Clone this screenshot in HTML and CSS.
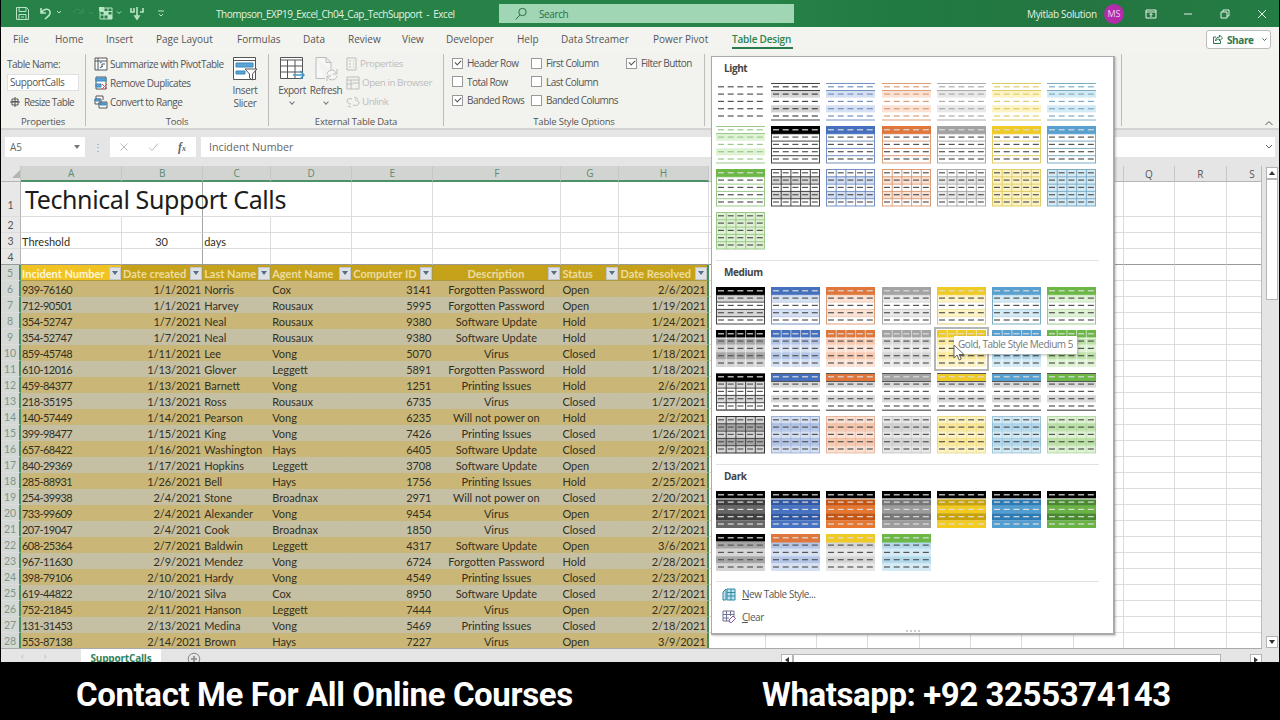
FILE: index.html
```html
<!DOCTYPE html>
<html lang="en">
<head>
    <meta charset="UTF-8">
    <title>Thompson_EXP19_Excel_Ch04_Cap_TechSupport - Excel</title>
    <link rel="stylesheet" href="styles.css">
</head>
<body>
<div class="window">
    <header class="titlebar">
        <div class="quick">
            <svg width="15" height="15" viewBox="0 0 15 15"><path d="M1.500 1.500h10l2 2v10h-12zM4 1.500v4h7v-4M4 13.500v-5h7v5M6 11h3"/></svg>
            <svg width="25" height="15" viewBox="0 0 25 15"><path class="thick" d="M2 2v5h5M2.500 6.500C5 2 12 2 11 7.500 10.500 10 8 11 6 13"/><path d="M18 5l2 2 2-2"/></svg>
            <svg class="faded" width="25" height="15" viewBox="0 0 25 15"><path d="M12 2v5H7M11.500 6.500C9 2 2 2 3 7.500M18 6l2 2 2-2"/></svg>
            <svg width="26" height="15" viewBox="0 0 26 15"><path d="M2 2h12v11H2zM2 5.500h12M2 9h12M6 2v11M10 2v11"/><path class="solid" d="M1 1h5v4H1zM6 6h4v3H6zM10 9h4v4h-4z"/><path d="M19 5.500l2 2 2-2"/></svg>
            <svg width="16" height="15" viewBox="0 0 16 15"><path class="thick" d="M2 2v4h3V2M8 1v9M11 6h3V2M6 10h4l-2 3z"/></svg>
            <svg class="more" width="10" height="10" viewBox="0 0 10 10"><path d="M2 2h6M3 5l2 2 2-2"/></svg>
        </div>
        <div class="doc-name">Thompson_EXP19_Excel_Ch04_Cap_TechSupport &nbsp;-&nbsp; Excel</div>
        <div class="search">
            <svg width="14" height="14" viewBox="0 0 14 14"><circle cx="8.500" cy="5" r="3.700"/><path d="M6 8l-4.500 4.500"/></svg>
            <span>Search</span>
        </div>
        <div class="account">Myitlab Solution</div>
        <div class="avatar">MS</div>
        <div class="win-buttons">
            <svg width="12" height="12" viewBox="0 0 12 12"><path d="M1 2h10v8H1zM1 4h10M6 9V5.500M4.500 7L6 5.500 7.500 7"/></svg>
            <svg width="12" height="12" viewBox="0 0 12 12"><path d="M2 6h8"/></svg>
            <svg width="12" height="12" viewBox="0 0 12 12"><path d="M2 4h6v6H2zM4 4V2h6v6H8"/></svg>
            <svg width="12" height="12" viewBox="0 0 12 12"><path d="M2 2l8 8M10 2l-8 8"/></svg>
        </div>
    </header>

    <nav class="tabs">
        <span>File</span><span>Home</span><span>Insert</span><span>Page Layout</span><span>Formulas</span><span>Data</span><span>Review</span><span>View</span><span>Developer</span><span>Help</span><span>Data Streamer</span><span>Power Pivot</span><span class="active">Table Design</span>
        <div class="share">
            <svg width="11" height="11" viewBox="0 0 11 11"><path d="M4 3H1.500v6.500h7V7M3.500 7c0-3 2-4 4-4V1l3 3-3 3V5c-2 0-3 .5-4 2z"/></svg>
            <b>Share</b>
            <svg width="7" height="7" viewBox="0 0 7 7"><path d="M1.500 2.500l2 2 2-2"/></svg>
        </div>
    </nav>

    <section class="ribbon">
        <div class="group props">
            <div class="stack">
                <span>Table Name:</span>
                <div class="name-input">SupportCalls</div>
                <span class="cmd"><svg width="12" height="12" viewBox="0 0 12 12"><path d="M3 3h6v6H3zM3 5.500h6M6 1v10M1 6h10"/></svg>Resize Table</span>
            </div>
            <div class="caption">Properties</div>
        </div>
        <div class="group tools">
            <div class="row">
                <div class="stack">
                    <span class="cmd pivot"><svg width="14" height="14" viewBox="0 0 14 14"><path class="fill-w" d="M1 1h12v12H1z"/><path d="M1 4h12M4 1v12M8 9.500V7h3M7 9l1 1 1-1"/><path class="blue" d="M6 6l2-1.500M6 11l2-1.500"/></svg>Summarize with PivotTable</span>
                    <span class="cmd"><svg width="14" height="14" viewBox="0 0 14 14"><path class="fill-w" d="M2 1h10v12H2z"/><path class="fill-b" d="M2 2h10v3H2zM2 8h5v3H2z"/><path class="red" d="M8 8l5 5M13 8l-5 5"/></svg>Remove Duplicates</span>
                    <span class="cmd"><svg width="14" height="14" viewBox="0 0 14 14"><path class="fill-w" d="M2 4V1h7v4M1 4h6v5H1zM5 7h8v6H5z"/><path class="fill-b" d="M6 8h6v2H6zM1 4h5v2H1z"/></svg>Convert to Range</span>
                </div>
                <div class="big slicer">
                    <svg width="26" height="26" viewBox="0 0 26 26"><path class="fill-w" d="M1.500 1.500h22v22h-22z"/><path d="M1.500 4.500h22"/><path class="fill-b" d="M4 7h17v4H4zM4 15h9v3H4z"/><path class="fill-w" d="M13 13h12l-4.500 5v6l-3-2v-4z"/></svg>
                    <span>Insert<br>Slicer</span>
                </div>
            </div>
            <div class="caption">Tools</div>
        </div>
        <div class="group ext">
            <div class="row">
                <div class="big">
                    <svg width="26" height="26" viewBox="0 0 26 26"><path class="fill-w" d="M1.500 1.500h22v21h-22z"/><path d="M1.500 4h22M1.500 10h22M1.500 16h22M8.500 4v18.500M16 4v18.500"/><path class="blue" d="M14 19h11M21 15l4 4-4 4"/></svg>
                    <span>Export</span><i class="chev"></i>
                </div>
                <div class="big">
                    <svg width="26" height="26" viewBox="0 0 26 26"><path class="pale" d="M3 1.500h10l5 5v7M3 1.500v21h9M13 1.500v5h5"/><path class="pale" d="M14 18c1-5 8-5 9-1M24 13v5h-4M24 20c-1 5-8 5-9 1M14 25v-5h4"/></svg>
                    <span>Refresh</span><i class="chev"></i>
                </div>
                <div class="stack off">
                    <span class="cmd"><svg width="12" height="14" viewBox="0 0 12 14"><path d="M1 1h9v12H1zM3 4h2M3 7h2M3 10h2M7 4h1M7 7h1M7 10h1"/></svg>Properties</span>
                    <span class="cmd"><svg width="14" height="14" viewBox="0 0 14 14"><path d="M1 1h12v12H1zM1 4h12M1 8h6M5 4v9M7 7h6"/></svg>Open in Browser</span>
                    <span class="cmd"><svg width="14" height="12" viewBox="0 0 14 12"><path d="M6 3C3 2 1 3 1 5s2 3 4 3M7 9c3 1 6 0 6-2s-2-3-4-3M8 1l4 2M2 10l3 1"/></svg>Unlink</span>
                </div>
            </div>
            <div class="caption">External Table Data</div>
        </div>
        <div class="group opts">
            <div class="checks">
                <label><i class="box on"></i>Header Row</label><label><i class="box"></i>First Column</label><label><i class="box on"></i>Filter Button</label>
                <label><i class="box"></i>Total Row</label><label><i class="box"></i>Last Column</label><span></span>
                <label><i class="box on"></i>Banded Rows</label><label><i class="box"></i>Banded Columns</label>
            </div>
            <div class="caption">Table Style Options</div>
        </div>
        <div class="group gallery-slot"></div>
        <div class="ribbon-end"><svg width="10" height="8" viewBox="0 0 10 8"><path d="M1.500 6L5 2.500 8.500 6"/></svg></div>
    </section>

    <section class="formula">
        <div class="name-box">A5<i class="tri"></i></div>
        <span class="dots">⋮</span>
        <div class="fx">
            <svg width="10" height="10" viewBox="0 0 10 10"><path d="M1.500 1.500l7 7M8.500 1.500l-7 7"/></svg>
            <svg width="11" height="10" viewBox="0 0 11 10"><path d="M1 5.500l3 3 6-7"/></svg>
            <em>f<small>x</small></em>
        </div>
        <div class="formula-text">Incident Number<svg width="10" height="8" viewBox="0 0 10 8"><path d="M2 2l3 3 3-3"/></svg></div>
    </section>

    <main class="sheet">
        <div class="cells"><table id="grid"></table></div>
        <div class="vscroll"><i class="arrow up"></i><i class="thumb"></i><i class="arrow down"></i></div>
    </main>

    <footer class="sheetbar">
        <span class="nav-arrows"><i>‹</i><i>›</i></span>
        <span class="sheet-tab">SupportCalls</span>
        <svg width="14" height="14" viewBox="0 0 14 14"><circle cx="7" cy="7" r="5.800"/><path class="plus" d="M7 4v6M4 7h6"/></svg>
        <div class="hscroll"><i class="arrow left"></i><i class="hthumb"></i><i class="arrow right"></i></div>
    </footer>

    <div class="styles-menu">
        <section class="light"><h3>Light</h3><div class="thumbs" id="light"></div></section>
        <section class="medium"><h3>Medium</h3><div class="thumbs" id="medium"></div></section>
        <section class="dark"><h3>Dark</h3><div class="thumbs" id="dark"></div></section>
        <div class="menu-items">
            <div><svg width="14" height="14" viewBox="0 0 14 14"><path class="teal" d="M5 2h8v11H5zM5 5.500h8M5 9h8M9 2v11"/><path class="teal" d="M1 5l3-3v11H1z"/></svg><span><u>N</u>ew Table Style...</span></div>
            <div><svg width="14" height="14" viewBox="0 0 14 14"><path class="slate" d="M1 1h11v7M1 1v10h6M1 4.500h11M1 8h6M4.500 1v10M8.500 1v5"/><path class="purple" d="M7 10l4-4 2.500 2.500-4 4H8z"/></svg><span><u>C</u>lear</span></div>
        </div>
        <div class="grip"><i></i><i></i><i></i><i></i></div>
        <div class="tooltip">Gold, Table Style Medium 5</div>
        <svg class="pointer" width="12" height="18" viewBox="0 0 12 18"><path d="M1 1v13l3-3 2.200 5 2-1-2-4.500H11z"/></svg>
    </div>
</div>
<div class="banner"><span class="contact">Contact Me For All Online Courses</span><span class="phone">Whatsapp: +92 3255374143</span></div>
<script src="script.js"></script>
</body>
</html>
```
FILE: styles.css
```css
* { box-sizing: border-box; }
body { margin: 0; width: 1280px; height: 720px; overflow: hidden; background: #000; font-family: "Open Sans", "Noto Sans", sans-serif; font-size: 10px; color: #555; }
svg { fill: none; stroke: currentColor; stroke-width: 1; flex: none; display: block; }
i { font-style: normal; }

.window { position: relative; width: 1278px; height: 662px; margin-left: 1px; overflow: hidden; background: #e4e4e4; }

/* title bar */
.titlebar { display: flex; align-items: center; height: 27px; background: linear-gradient(90deg, #268246 0 60%, #207b41 70%, #257541 85%, #237d43); color: #e2f2e6; }
.quick { display: flex; align-items: center; width: 215px; padding-left: 14px; color: #b9e4c5; }
.quick svg:nth-child(2) { margin-left: 9px; }
.quick svg:nth-child(3) { margin-left: 7px; }
.quick svg:nth-child(4) { margin-left: 2px; }
.quick svg:nth-child(5) { margin-left: 5px; }
.quick .more { margin-left: 11px; }
.thick { stroke-width: 1.6; }
.solid { fill: currentColor; stroke: none; }
.faded { opacity: .15; }
.doc-name { width: 283px; white-space: nowrap; padding-top: 1px; font-size: 10px; letter-spacing: -.48px; }
.search { display: flex; align-items: center; width: 295px; height: 19px; padding-left: 15px; background: #a1d6b4; color: #2c6d45; }
.search span { margin-left: 11px; letter-spacing: -.4px; }
.account { width: 77px; margin-left: 233px; white-space: nowrap; letter-spacing: -.35px; }
.avatar { width: 20px; height: 20px; border-radius: 50%; background: #b32cab; color: #f0c9ee; text-align: center; line-height: 20px; font-size: 9px; }
.win-buttons { display: flex; gap: 25px; margin-left: 21px; }

/* ribbon tabs */
.tabs { position: relative; display: grid; grid-template-columns: 42px 51px 50px 81px 66px 45px 54px 44px 71px 44px 92px 79px 61px 1fr; height: 25px; padding-left: 12px; background: #f3f3f0; line-height: 25px; white-space: nowrap; }
.tabs .active { color: #2a8450; font-weight: 600; letter-spacing: -.2px; border-bottom: 2px solid #2a7a4c; height: 22px; }
.share { display: flex; align-items: center; justify-self: end; gap: 4px; width: 65px; height: 19px; margin: 3px 8px 0 0; padding-left: 5px; background: #fff; border: 1px solid #bbb; border-radius: 3px; color: #2f7650; font-size: 10px; letter-spacing: -.4px; line-height: 18px; }
.share svg:last-child { margin-left: 3px; }

/* ribbon */
.ribbon { display: grid; grid-template-columns: 85px 183px 175px 261px 417px 1fr; height: 78px; padding-top: 2px; background: #f2f2ef; border-bottom: 2px solid #d3d3d3; letter-spacing: -.15px; white-space: nowrap; }
.group { display: flex; flex-direction: column; justify-content: space-between; height: 72px; border-right: 1px solid #bcbcbc; }
.caption { text-align: center; line-height: 14px; margin-bottom: -3px; font-size: 9.500px; letter-spacing: -.2px; }
.row { display: flex; }
.stack { display: grid; grid-template-rows: repeat(3, 19px); align-items: center; }
.props .stack { padding-left: 6px; letter-spacing: -.5px; }
.name-input { width: 72px; height: 17px; padding-left: 2px; background: #fff; border: 1px solid #e0e0e0; line-height: 15px; letter-spacing: -.4px; }
.cmd { display: flex; align-items: center; gap: 2px; }
.props .cmd { gap: 3px; padding-left: 2px; letter-spacing: -.6px; }
.tools .stack { width: 136px; padding-left: 8px; letter-spacing: -.5px; }
.tools .pivot { letter-spacing: -.5px; }
.fill-w { fill: #fff; }
.fill-b { fill: #5aa5d8; stroke: #3f85b8; }
.blue { stroke: #3c9ac7; stroke-width: 1.500; }
.red { stroke: #d05050; }
.pale { stroke: #bbb; fill: #f7f7f7; }
.big { display: flex; flex-direction: column; align-items: center; padding-top: 2px; line-height: 13px; text-align: center; }
.big span { margin-top: 2px; }
.slicer { margin-left: 9px; width: 28px; letter-spacing: -.35px; }
.ext .big { width: 34px; letter-spacing: -.5px; }
.ext .big:first-child { margin-left: 6px; }
.ext .off { margin-left: 3px; color: #bdbdbd; font-size: 9.800px; letter-spacing: -.45px; }
.chev { width: 4px; height: 4px; margin-top: 3px; border: solid #777; border-width: 0 1px 1px 0; transform: rotate(45deg); }
.checks { display: grid; grid-template-columns: 79px 95px 1fr; grid-template-rows: repeat(3, 18.500px); padding-left: 8px; align-items: center; letter-spacing: -.55px; }
.checks label { display: flex; align-items: center; gap: 4px; }
.box { width: 11px; height: 11px; border: 1px solid #999; background: #fff; position: relative; }
.box.on::after { content: ""; position: absolute; left: 2px; top: 1.500px; width: 5px; height: 3px; border: solid #555; border-width: 0 0 1px 1px; transform: rotate(-45deg); }
.ribbon-end { display: flex; align-items: flex-end; justify-content: flex-end; padding: 0 5px 1px 0; }

/* formula bar */
.formula { display: flex; height: 36px; padding-top: 7px; background: #e5e5e5; color: #666; }
.formula > * { height: 20px; line-height: 20px; }
.name-box { display: flex; justify-content: space-between; align-items: center; width: 80px; margin-left: 4px; padding: 0 5px; background: #fff; }
.tri { border: 3px solid transparent; border-top: 4px solid #777; border-bottom: 0; }
.dots { width: 25px; text-align: center; color: #999; }
.fx { display: flex; align-items: center; width: 86px; padding-left: 9px; gap: 19px; background: #fff; color: #bbb; }
.fx em { font: italic bold 12px "Liberation Serif", serif; color: #666; }
.fx small { font-size: 8px; }
.formula-text { display: flex; align-items: center; justify-content: space-between; width: 1074px; margin-left: 5px; padding: 0 1px 0 8px; background: #fff; font-size: 10.700px; }

/* sheet */
.sheet { display: flex; height: 483px; }
.cells { width: 1261px; height: 483px; overflow: hidden; border-right: 1px solid #bbb; border-bottom: 1px solid #aaa; background: #fff; }
#grid { table-layout: fixed; width: 1277px; border-spacing: 0; font-family: Lato, sans-serif; font-size: 11px; line-height: 13px; color: #332f22; }
#grid th, #grid td { padding: 2px 2px 0 1px; height: 16px; border: solid #dcdcdc; border-width: 0 1px 1px 0; white-space: nowrap; overflow: visible; }
#grid .num { padding-right: 1px; letter-spacing: -.08px; }
#grid .in:nth-child(2) { letter-spacing: -.7px; letter-spacing: -.55px; }
#grid .head .in:nth-child(2) { letter-spacing: 0; }
#grid thead th { height: 16px; padding: 0; background: #e5e5e5; border-right-color: #c6c6c6; border-bottom-color: #b5b5b5; font: 10px "Open Sans", sans-serif; line-height: 14px; color: #555; }
#grid thead .sel { background: #d1d4d1; border-bottom: 2px solid #4c9167; color: #5d8b72; line-height: 13px; }
#grid thead .corner { text-align: right; padding: 0; }
.corner i { display: inline-block; border-left: 8px solid transparent; border-bottom: 8px solid #b5b5b5; }
#grid tbody th { background: #e8e8e8; border-right-color: #b5b5b5; font-weight: 400; font-size: 10.500px; color: #555; padding: 2px 0 0; }
#grid .r1 th, #grid .r1 td { height: 35px; vertical-align: bottom; }
#grid .r1 th { padding-bottom: 4px; }
#grid .r1 .title { font-family: "Noto Sans", sans-serif; font-size: 25px; line-height: 33px; padding: 0 0 0 4px; color: #1c1c1c; letter-spacing: -.4px; }
#grid .r1 .title, #grid .r1 .over { border-right-color: transparent; }
#grid .r4 td, #grid .r4 th { border-bottom-color: #999; }
#grid .freeze { border-right-color: #a5a5a5; }
#grid tbody .selrow th { background: #d5d9d5; color: #7f9588; border-right: 2px solid #479165; }
#grid .band0 .in { background: #cab778; border-color: #c8b77b; }
#grid .band1 .in { background: #c5bfa3; border-color: #c3bea4; }
#grid .selrow .last { border-right: 2px solid #478d5b !important; }
.num { text-align: right; }
.mid { text-align: center; }
#grid .head .in { height: 16px; padding: 0 0 0 1px; background: #c5a219; border-color: #ae9943; color: #eddca0; font-weight: 700; }
#grid .head .first { background: #f1c322; color: #fff6d9; }
.hcell { display: flex; align-items: center; justify-content: space-between; height: 15px; padding-top: 1px; }
.hcell span { flex: 1; padding-top: 1px; }
.hcell span.mid { padding-left: 9px; }
.filter { display: flex; align-items: center; justify-content: center; width: 12px; height: 13px; background: #dfe2e5; border: 1px solid #c4c7ca; }
.filter::after { content: ""; border: 3px solid transparent; border-top: 4px solid #536c87; border-bottom: 0; }
.vscroll { display: flex; flex-direction: column; align-items: center; width: 17px; padding: 1px 0 1px 3px; }
.arrow { display: flex; align-items: center; justify-content: center; width: 12px; height: 12px; background: #fff; border: 1px solid #b5b5b5; flex: none; }
.arrow::after { content: ""; border: 3px solid transparent; }
.up::after { border-bottom: 4px solid #333; border-top: 0; }
.down::after { border-top: 4px solid #333; border-bottom: 0; }
.left::after { border-right: 4px solid #333; border-left: 0; }
.right::after { border-left: 4px solid #333; border-right: 0; }
.thumb { width: 12px; height: 121px; margin-bottom: auto; background: #fff; border: 1px solid #b5b5b5; }

/* sheet tabs */
.sheetbar { display: flex; height: 13px; color: #888; background: #e5e5e5; }
.nav-arrows { display: flex; gap: 20px; width: 80px; padding-left: 20px; color: #bbb; font-size: 9px; line-height: 13px; }
.sheet-tab { width: 80px; height: 13px; background: #fff; color: #318258; font-weight: 700; text-align: center; letter-spacing: -.2px; line-height: 19px; }
.sheetbar > svg { margin: 3px 0 0 26px; }
.plus { stroke-width: 1.600; }
.hscroll { display: flex; width: 481px; margin: 5px 0 0 580px; }
.hthumb { width: 428px; height: 20px; background: #fff; border: 1px solid #b5b5b5; }
.hscroll .right { margin-left: auto; }

/* table styles gallery */
.styles-menu { position: absolute; left: 710px; top: 56px; width: 404px; height: 579px; background: #fff; border: 1px solid #aaa; border-width: 1px 2px 2px 1px; box-shadow: 1px 1px 2px #0003; }
.styles-menu section { margin: 0 14px 0 4px; border-bottom: 1px solid #e2e2e2; }
.styles-menu h3 { height: 25.500px; margin: 0; padding: 4px 0 0 8px; font-size: 10px; line-height: 15px; font-weight: 700; color: #444; letter-spacing: -.4px; }
.light { height: 204px; }
.medium { height: 204px; }
.dark { height: 117px; }
.thumbs { display: grid; grid-template-columns: repeat(7, 55.200px); grid-auto-rows: 43.300px; }
.thumbs svg { width: 49px; height: 38px; stroke: none; }
.thumbs .hover { outline: 2px solid #b5b5b5; outline-offset: 1px; }
.menu-items { padding-left: 10px; color: #555; }
.menu-items div { display: flex; align-items: center; gap: 6px; height: 23px; letter-spacing: -.45px; }
.teal { stroke: #3188a3; fill: #bde3ec; }
.slate { stroke: #6d7191; }
.purple { stroke: #8d54a5; fill: #fff; }
.grip { display: flex; gap: 2px; justify-content: center; margin-top: 2px; }
.grip i { width: 2px; height: 2px; background: #ccc; }
.tooltip { position: absolute; left: 242px; top: 279px; width: 123px; height: 18px; padding-left: 4px; background: #fff; box-shadow: 1px 1px 3px #0004; line-height: 17px; color: #777; white-space: nowrap; letter-spacing: -.45px; }
.pointer { position: absolute; left: 241px; top: 287px; fill: #fff; stroke: #666; }

/* bottom banner */
.banner { display: flex; height: 58px; padding-left: 76px; color: #fff; font: 700 33px/65px Roboto, sans-serif; white-space: nowrap; letter-spacing: -.38px; }
.contact { width: 686px; }
.phone { letter-spacing: -.42px; }
```
FILE: script.js
```js
const widths = [20, 101, 81, 68, 81, 81, 128, 58, 89, 57, 51, 51, 52, 51, 51, 52, 50, 51, 52, 51];
const letters = 'ABCDEFGHIJKLMNOPQRS'.split('');
const headers = ['Incident Number', 'Date created', 'Last Name', 'Agent Name', 'Computer ID', 'Description', 'Status', 'Date Resolved'];
const align = ['', 'num', '', '', 'num', 'mid', '', 'num'];
const calls = [
    '939-76160|1/1/2021|Norris|Cox|3141|Forgotten Password|Open|2/6/2021',
    '712-90501|1/1/2021|Harvey|Rousaux|5995|Forgotten Password|Open|1/19/2021',
    '354-52747|1/7/2021|Neal|Rousaux|9380|Software Update|Hold|1/24/2021',
    '354-52747|1/7/2021|Neal|Rousaux|9380|Software Update|Hold|1/24/2021',
    '859-45748|1/11/2021|Lee|Vong|5070|Virus|Closed|1/18/2021',
    '610-12016|1/13/2021|Glover|Leggett|5891|Forgotten Password|Hold|1/18/2021',
    '459-84377|1/13/2021|Barnett|Vong|1251|Printing Issues|Hold|2/6/2021',
    '218-35195|1/13/2021|Ross|Rousaux|6735|Virus|Closed|1/27/2021',
    '140-57449|1/14/2021|Pearson|Vong|6235|Will not power on|Hold|2/2/2021',
    '399-98477|1/15/2021|King|Vong|7426|Printing Issues|Closed|1/26/2021',
    '657-68422|1/16/2021|Washington|Hays|6405|Software Update|Closed|2/9/2021',
    '840-29369|1/17/2021|Hopkins|Leggett|3708|Software Update|Open|2/13/2021',
    '285-88931|1/26/2021|Bell|Hays|1756|Printing Issues|Hold|2/25/2021',
    '254-39938|2/4/2021|Stone|Broadnax|2971|Will not power on|Closed|2/20/2021',
    '733-99609|2/4/2021|Alexander|Vong|9454|Virus|Open|2/17/2021',
    '207-19047|2/4/2021|Cook|Broadnax|1850|Virus|Closed|2/12/2021',
    '608-25364|2/7/2021|Baldwin|Leggett|4317|Software Update|Open|3/6/2021',
    '967-11630|2/9/2021|Mendez|Vong|6724|Forgotten Password|Hold|2/28/2021',
    '398-79106|2/10/2021|Hardy|Vong|4549|Printing Issues|Closed|2/23/2021',
    '619-44822|2/10/2021|Silva|Cox|8950|Software Update|Closed|2/12/2021',
    '752-21845|2/11/2021|Hanson|Leggett|7444|Virus|Open|2/27/2021',
    '131-31453|2/13/2021|Medina|Vong|5469|Printing Issues|Closed|2/18/2021',
    '553-87138|2/14/2021|Brown|Hays|7227|Virus|Open|3/9/2021'
];

const blanks = n => '<td></td>'.repeat(n);

function topRow(n) {
    if (n === 1) return `<tr class="r1"><th>1</th><td class="title">Technical Support Calls</td><td class="freeze"></td><td class="over"></td>${blanks(16)}</tr>`;
    if (n === 3) return `<tr><th>3</th><td>Threshold</td><td class="mid freeze">30</td><td>days</td>${blanks(16)}</tr>`;
    return `<tr class="r${n}"><th>${n}</th><td></td><td class="freeze"></td>${blanks(17)}</tr>`;
}

let html = '<colgroup>' + widths.map(w => `<col style="width:${w}px">`).join('') + '</colgroup>';
html += '<thead><tr><th class="corner"><i></i></th>' + letters.map((l, i) => `<th class="${i < 8 ? 'sel' : ''}">${l}</th>`).join('') + '</tr></thead><tbody>';
for (let n = 1; n < 5; n++) html += topRow(n);
html += '<tr class="head selrow"><th>5</th>' + headers.map((h, i) =>
    `<td class="in ${i === 0 ? 'first' : ''} ${i === 7 ? 'last' : ''}"><div class="hcell"><span class="${i === 5 ? 'mid' : ''}">${h}</span><i class="filter"></i></div></td>`).join('') + blanks(11) + '</tr>';
calls.forEach((line, r) => {
    html += `<tr class="selrow band${r % 2}"><th>${r + 6}</th>` + line.split('|').map((v, i) =>
        `<td class="in ${align[i]} ${i === 7 ? 'last' : ''}">${v}</td>`).join('') + blanks(11) + '</tr>';
});
document.getElementById('grid').innerHTML = html + '</tbody>';

// colour sets: main, border, band, strong band, dark band, dark alternate
const sets = [
    ['#000', '#444', '#d5d5d5', '#a6a6a6', '#3f3f3f', '#666'],
    ['#4470bd', '#7591c3', '#d6e0f3', '#b4c6e7', '#3159a5', '#4773c4'],
    ['#df763c', '#dc9d79', '#fbe2d5', '#f6c9b0', '#c45513', '#e57731'],
    ['#a3a3a3', '#ababab', '#e8e8e8', '#d6d6d6', '#777', '#9c9c9c'],
    ['#efca25', '#dfcd67', '#fdf3c4', '#fbe898', '#c9a208', '#f2cb1e'],
    ['#57a0d0', '#7cadc7', '#d4eaf5', '#b4d9ed', '#2d7bb5', '#539ed1'],
    ['#6bb846', '#9bc98a', '#dff2d4', '#bde2a7', '#47892d', '#69b345']
];
const rect = (x, y, w, h, c) => `<rect x="${x}" y="${y}" width="${w}" height="${h}" fill="${c}"/>`;

function thumb(kind, set, hover) {
    const [main, edge, band, strong, dark, mid] = sets[set];
    let s = '';
    let dash = '#555', headDash = '#ddd';
    const fill = (a, b) => { for (let i = 0; i < 5; i++) s += rect(0, i * 7.4, 49, 7.4, i % 2 ? a : b); };
    const hline = (y, c, h = 1) => s += rect(0, y, 49, h, c);
    const frame = c => s += `<rect x=".5" y=".5" width="48" height="36.500" fill="none" stroke="${c}"/>`;
    const cols = c => { for (let i = 1; i < 5; i++) s += rect(i * 9.7, 0, 1, 37, c); };
    const rows = c => { for (let i = 1; i < 5; i++) hline(i * 7.3, c); };
    if (kind === 'plain') headDash = '#555';
    if (kind === 'lines') { fill(band, '#fff'); hline(0, edge); hline(7, edge); hline(36.500, edge); dash = headDash = edge; }
    if (kind === 'boxed') { rows(edge); frame(edge); s += rect(0, 0, 49, 7.800, main); }
    if (kind === 'grid') {
        if (set > 3) fill(band, band); else fill(band, '#fff');
        rows(edge); cols(edge); frame(edge); headDash = '#555';
    }
    if (kind === 'banded') { fill(band, '#fff'); rows(set ? edge + '77' : '#444'); frame(edge); s += rect(0, 0, 49, 7.800, main); }
    if (kind === 'split') { fill(strong, band); s += rect(0, 0, 49, 8, main); cols('#fff9'); hline(7.500, '#fff'); }
    if (kind === 'gray') {
        fill('#d9d9d9', '#fff');
        if (set === 0) { rows('#444'); cols('#444'); frame('#444'); }
        s += rect(0, 0, 49, 8.500, main); hline(0, '#555'); hline(8, '#555'); hline(36.500, '#777', 1.5);
    }
    if (kind === 'full') { fill(strong, band); rows(set ? edge + '55' : '#444'); cols(set ? edge + '55' : '#444'); frame(set ? edge + '99' : '#333'); headDash = '#555'; }
    if (kind === 'dark') { fill(dark, mid); s += rect(0, 0, 49, 7.500, '#000'); dash = '#ddd'; }
    if (kind === 'duo') {
        const heads = { 0: '#000', 1: '#df763c', 3: '#efca25', 5: '#6bb846' };
        fill(strong, band); s += rect(0, 0, 49, 8.500, heads[set]);
    }
    if (kind === 'dark' || (kind === 'duo' && set === 0)) hline(7.500, '#eee');
    for (let r = 0; r < 5; r++)
        for (let c = 0; c < 5; c++)
            s += rect(2 + c * 9.7, 3.2 + r * 7.3, 6, 1.2, r ? dash : headDash);
    return `<svg viewBox="0 0 49 38" class="${hover ? 'hover' : ''}">${s}</svg>`;
}
const all = [0, 1, 2, 3, 4, 5, 6];
document.getElementById('light').innerHTML = thumb('plain', 0) + ['lines', 'boxed', 'grid'].map(k => all.map(i => thumb(k, i)).join('')).join('');
document.getElementById('medium').innerHTML = ['banded', 'split', 'gray', 'full'].map(k => all.map(i => thumb(k, i, k === 'split' && i === 4)).join('')).join('');
document.getElementById('dark').innerHTML = all.map(i => thumb('dark', i)).join('') + [0, 1, 3, 5].map(i => thumb('duo', i)).join('');
```
